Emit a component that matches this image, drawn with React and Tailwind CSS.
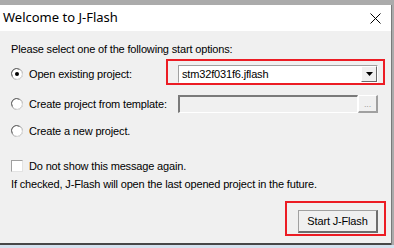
import { useState } from 'react'

const body = { fontFamily: '"Liberation Sans", Arial, sans-serif' }

function Radio({ checked }) {
  return (
    <svg width="12" height="12" viewBox="0 0 12 12" className="shrink-0">
      <circle cx="6" cy="6" r="5.5" fill="#fff" stroke="#a0a0a0" />
      <path d="M1.5 8.5 A5 5 0 0 1 8.5 1.5" fill="none" stroke="#696969" strokeWidth="1" />
      <path d="M10.5 3.5 A5 5 0 0 1 3.5 10.5" fill="none" stroke="#e3e3e3" strokeWidth="1" />
      {checked && <circle cx="6" cy="6" r="2" fill="#000" />}
    </svg>
  )
}

function Option({ checked, label, children }) {
  return (
    <div className="flex items-center h-[18px]">
      <div className="flex items-center w-[167px]">
        <Radio checked={checked} />
        <span className="ml-[6px] text-[11px] leading-[14px] tracking-[-0.16px] text-black">{label}</span>
      </div>
      {children}
    </div>
  )
}

export default function App() {
  const [hide, setHide] = useState(false)

  return (
    <div className="w-[394px] h-[248px] bg-[#ababab] flex flex-col overflow-hidden" style={body}>
      <div className="h-[5px] shrink-0" />
      <div className="relative flex flex-col w-[392px] flex-1 border-r border-[#7a7a7a]">
        {/* title bar */}
        <div className="h-[26px] bg-white flex items-center justify-between pl-[3px] pr-[10px] shrink-0">
          <span className="text-[13px] text-black" style={{ fontFamily: '"Noto Sans", "Open Sans", sans-serif' }}>
            Welcome to J-Flash
          </span>
          <svg width="11" height="11" viewBox="0 0 11 11">
            <path d="M0.5 0.5 L10.5 10.5 M10.5 0.5 L0.5 10.5" stroke="#000" strokeWidth="1" />
          </svg>
        </div>

        {/* content */}
        <div className="flex-1 bg-[#f0f0f0] flex flex-col pl-[11px] pr-[13px] text-[11px] leading-[14px] tracking-[-0.16px] text-black">
          <div className="mt-[11px] h-[14px]">
            Please select one of the following start options:
          </div>

          <div className="mt-[9px]">
            <Option checked label="Open existing project:">
              <div className="flex-1 h-[18px] bg-white flex items-center border-t border-l border-[#a0a0a0] border-r border-b border-r-white border-b-white">
                <span className="flex-1 pl-[3px]">stm32f031f6.jflash</span>
                <div className="w-[16px] h-[16px] bg-[#f0f0f0] flex items-center justify-center border-t border-l border-white border-r border-b border-r-[#696969] border-b-[#696969]">
                  <svg width="7" height="4" viewBox="0 0 7 4">
                    <path d="M0 0 H7 L3.5 4 Z" fill="#000" />
                  </svg>
                </div>
              </div>
            </Option>
          </div>

          <div className="mt-[12px]">
            <Option label="Create project from template:">
              <div className="flex-1 flex h-[18px]">
                <div className="flex-1 bg-[#f0f0f0] border-t-2 border-l-2 border-[#7a7a7a] border-r border-b border-r-white border-b-white" />
                <div className="w-[20px] bg-[#f0f0f0] flex items-end justify-center pb-[3px] border-t border-l border-white border-r-2 border-b-2 border-r-[#a0a0a0] border-b-[#a0a0a0]">
                  <span className="text-[9px] leading-[8px] text-[#a0a0a0]">...</span>
                </div>
              </div>
            </Option>
          </div>

          <div className="mt-[9px]">
            <Option label="Create a new project." />
          </div>

          <div className="mt-[19px] h-[14px] flex items-center">
            <button
              onClick={() => setHide(!hide)}
              className="w-[12px] h-[12px] bg-white shrink-0 border-t border-l border-[#a0a0a0] border-r border-b border-r-[#e3e3e3] border-b-[#e3e3e3]"
            />
            <span className="ml-[6px]">Do not show this message again.</span>
          </div>

          <div className="mt-[4px] h-[14px]">
            If checked, J-Flash will open the last opened project in the future.
          </div>

          <div className="mt-[19px] flex justify-end">
            <button className="w-[80px] h-[23px] bg-[#f0f0f0] border-t border-l border-[#a0a0a0] border-r-2 border-b-2 border-r-[#6d6d6d] border-b-[#6d6d6d]">
              Start J-Flash
            </button>
          </div>
        </div>

        <div className="h-[2px] bg-[#474747] shrink-0" />

        {/* annotation boxes */}
        <div className="absolute left-[166px] top-[54px] w-[219px] h-[26px] border-2 border-[#ec1c24]" />
        <div className="absolute left-[285px] top-[196px] w-[101px] h-[35px] border-2 border-[#ec1c24]" />
      </div>
      <div className="h-[3px] bg-[#d4e1ee] shrink-0" />
    </div>
  )
}
